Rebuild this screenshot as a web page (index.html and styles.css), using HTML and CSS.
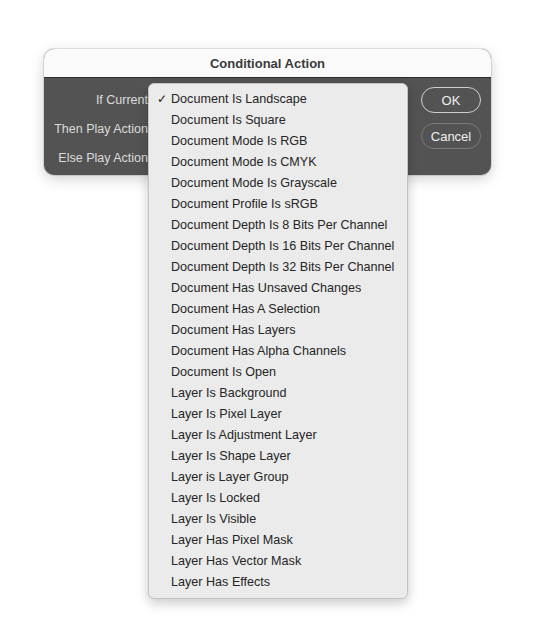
FILE: index.html
```html
<!DOCTYPE html>
<html lang="en">
<head>
    <meta charset="UTF-8">
    <title>Conditional Action</title>
    <link rel="stylesheet" href="styles.css">
</head>
<body>

<div class="dialog">
    <div class="titlebar">Conditional Action</div>
    <div class="content">
        <div class="labels">
            <span>If Current</span>
            <span>Then Play Action</span>
            <span>Else Play Action</span>
        </div>
        <div class="fields"></div>
        <div class="buttons">
            <button class="btn default">OK</button>
            <button class="btn">Cancel</button>
        </div>
    </div>

    <ul class="menu">
        <li class="checked">Document Is Landscape</li>
        <li>Document Is Square</li>
        <li>Document Mode Is RGB</li>
        <li>Document Mode Is CMYK</li>
        <li>Document Mode Is Grayscale</li>
        <li>Document Profile Is sRGB</li>
        <li>Document Depth Is 8 Bits Per Channel</li>
        <li>Document Depth Is 16 Bits Per Channel</li>
        <li>Document Depth Is 32 Bits Per Channel</li>
        <li>Document Has Unsaved Changes</li>
        <li>Document Has A Selection</li>
        <li>Document Has Layers</li>
        <li>Document Has Alpha Channels</li>
        <li>Document Is Open</li>
        <li>Layer Is Background</li>
        <li>Layer Is Pixel Layer</li>
        <li>Layer Is Adjustment Layer</li>
        <li>Layer Is Shape Layer</li>
        <li>Layer is Layer Group</li>
        <li>Layer Is Locked</li>
        <li>Layer Is Visible</li>
        <li>Layer Has Pixel Mask</li>
        <li>Layer Has Vector Mask</li>
        <li>Layer Has Effects</li>
    </ul>
</div>

</body>
</html>
```

FILE: styles.css
```css
html, body {
    margin: 0;
    padding: 0;
    min-height: 630px;
}
body {
    background: #fff;
    font-family: "Liberation Sans", Arial, sans-serif;
    font-size: 13px;
    padding-top: 49px;
    box-sizing: border-box;
}
.dialog {
    position: relative;
    width: 447px;
    margin-left: 44px;
    border-radius: 10px;
    background: #535353;
    box-shadow: 0 0 0 1px rgba(0, 0, 0, 0.1), 0 4px 14px rgba(0, 0, 0, 0.18);
}
.titlebar {
    height: 28px;
    line-height: 29px;
    text-align: center;
    background: #fafafa;
    border-radius: 10px 10px 0 0;
    border-bottom: 1px solid #2e2e2e;
    color: #3a3a3a;
    font-weight: bold;
    font-size: 13px;
}
.content {
    display: flex;
    height: 97px;
}
.labels {
    display: flex;
    flex-direction: column;
    align-items: flex-end;
    width: 104px;
    padding-top: 14px;
    gap: 13px;
    color: #dcdcdc;
    font-size: 12.5px;
}
.labels span {
    line-height: 16px;
}
.fields {
    flex: 1;
}
.buttons {
    display: flex;
    flex-direction: column;
    gap: 10px;
    padding: 9px 10px 0 0;
}
.btn {
    width: 60px;
    height: 26px;
    border-radius: 13px;
    border: 1px solid #7a7a7a;
    background: transparent;
    color: #f0f0f0;
    font-family: inherit;
    font-size: 13px;
    padding: 0;
}
.btn.default {
    border: 1.5px solid #cfcfcf;
}
.menu {
    position: absolute;
    left: 104px;
    top: 34px;
    width: 258px;
    margin: 0;
    padding: 5px 0;
    list-style: none;
    background: #ebebeb;
    border: 1px solid #c4c4c4;
    border-radius: 6px;
    box-shadow: 0 4px 12px rgba(0, 0, 0, 0.22);
}
.menu li {
    height: 21px;
    line-height: 21px;
    padding-left: 22px;
    color: #252525;
    font-size: 12.6px;
    white-space: nowrap;
    position: relative;
}
.menu li.checked::before {
    content: "\2713";
    position: absolute;
    left: 8px;
    font-size: 12px;
}
```
